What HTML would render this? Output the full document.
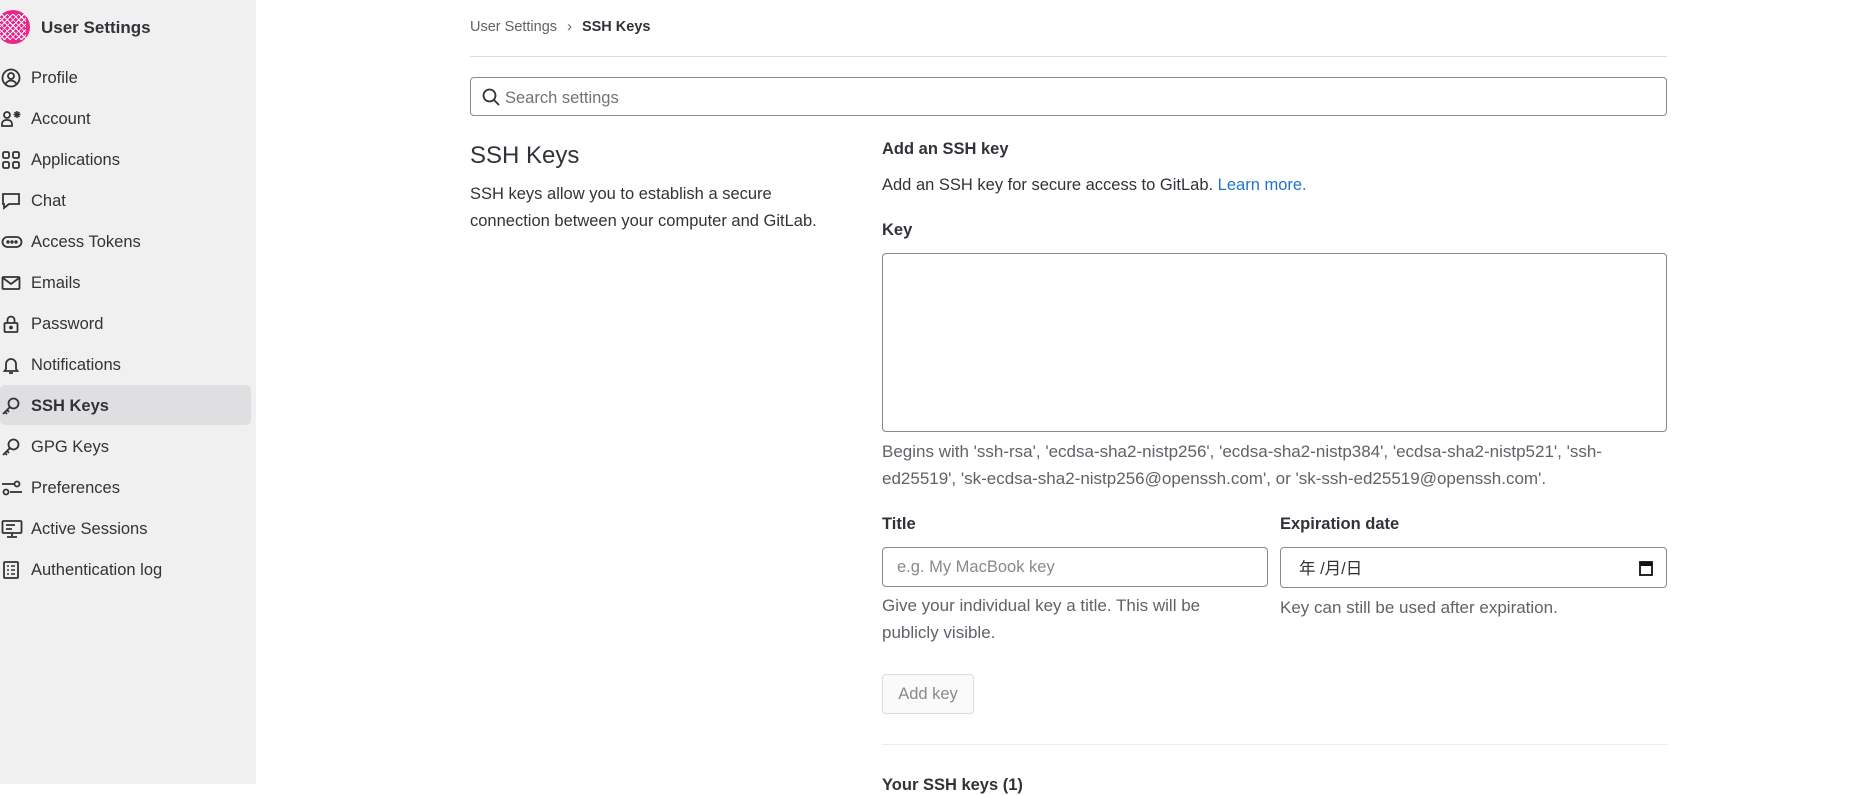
<!DOCTYPE html>
<html><head><meta charset="utf-8"><style>
*{box-sizing:border-box;margin:0;padding:0}
body{width:1856px;height:784px;overflow:hidden;background:#fff;font-family:"Liberation Sans","Noto Sans CJK SC",sans-serif;color:#333238;position:relative}
.sb{position:absolute;left:0;top:0;width:256px;height:784px;background:#f0f0f0}
.logo{position:absolute;left:-4px;top:10px;width:34px;height:34px;border-radius:50%;background:#e9278b;overflow:hidden}
.logo:after{content:"";position:absolute;inset:4px;background:repeating-linear-gradient(45deg,transparent 0 3px,#fff 3px 4px),repeating-linear-gradient(-45deg,transparent 0 3px,#fff 3px 4px)}
.title{position:absolute;left:41px;top:18px;font-size:17px;font-weight:bold}
.item{position:absolute;left:0;width:251px;height:40px;font-size:16.5px;display:flex;align-items:center;padding-left:31px;border-radius:5px;padding-top:2px}
.item svg{position:absolute;left:1px;top:11px}
.item.act{background:#dfdfe2;font-weight:bold}
.abs{position:absolute}
.inp{position:absolute;border:1px solid #89888d;border-radius:4px;background:#fff}
.lbl{position:absolute;font-size:16.5px;font-weight:bold}
.help{position:absolute;font-size:17px;color:#626168;line-height:27px}
</style></head><body>
<div class="sb">
<div class="logo"></div>
<div class="title">User Settings</div>
<div class="item" style="top:57px"><svg width="20" height="20" viewBox="0 0 20 20" fill="none" stroke="#333" stroke-width="1.8"><circle cx="10" cy="10" r="8.5"/><circle cx="10" cy="8" r="3"/><path d="M4.5 16c1.5-2.5 3.5-3.5 5.5-3.5s4 1 5.5 3.5"/></svg>Profile</div>
<div class="item" style="top:98px"><svg width="22" height="20" viewBox="0 0 22 20" fill="none" stroke="#333" stroke-width="1.8"><circle cx="6" cy="6" r="3"/><path d="M1 17v-2a4 4 0 0 1 4-4h2a4 4 0 0 1 4 4v2z"/><path d="M16 2v7M12.5 5.5h7M13.5 3l5 5M18.5 3l-5 5" stroke-width="1.5"/></svg>Account</div>
<div class="item" style="top:139px"><svg width="20" height="20" viewBox="0 0 20 20" fill="none" stroke="#333" stroke-width="1.8"><rect x="2" y="2" width="6" height="6" rx="1.5"/><rect x="12" y="2" width="6" height="6" rx="1.5"/><rect x="2" y="12" width="6" height="6" rx="1.5"/><rect x="12" y="12" width="6" height="6" rx="1.5"/></svg>Applications</div>
<div class="item" style="top:180px"><svg width="20" height="20" viewBox="0 0 20 20" fill="none" stroke="#333" stroke-width="1.8"><path d="M2 3h16v10H8l-5 4v-4H2z"/></svg>Chat</div>
<div class="item" style="top:221px"><svg width="22" height="20" viewBox="0 0 22 20" fill="none" stroke="#333" stroke-width="1.8"><rect x="1.5" y="5" width="19" height="10" rx="5"/><circle cx="7" cy="10" r=".8" fill="#333"/><circle cx="11" cy="10" r=".8" fill="#333"/><circle cx="15" cy="10" r=".8" fill="#333"/></svg>Access Tokens</div>
<div class="item" style="top:262px"><svg width="20" height="20" viewBox="0 0 20 20" fill="none" stroke="#333" stroke-width="1.8"><rect x="1.5" y="4" width="17" height="12" rx="1"/><path d="M2 5l8 6 8-6"/></svg>Emails</div>
<div class="item" style="top:303px"><svg width="20" height="20" viewBox="0 0 20 20" fill="none" stroke="#333" stroke-width="1.8"><rect x="3.5" y="9" width="13" height="9" rx="1"/><path d="M6.5 9V6a3.5 3.5 0 0 1 7 0v3"/><circle cx="10" cy="13.5" r="1" fill="#333"/></svg>Password</div>
<div class="item" style="top:344px"><svg width="20" height="20" viewBox="0 0 20 20" fill="none" stroke="#333" stroke-width="1.8"><path d="M5 14V9a5 5 0 0 1 10 0v5l1.5 2h-13z"/><path d="M8 18h4"/></svg>Notifications</div>
<div class="item act" style="top:385px"><svg width="20" height="20" viewBox="0 0 20 20" fill="none" stroke="#333" stroke-width="1.8"><circle cx="12.5" cy="7.5" r="5"/><path d="M9 11l-7 7M4 16l2 2M6 14l2 2"/></svg>SSH Keys</div>
<div class="item" style="top:426px"><svg width="20" height="20" viewBox="0 0 20 20" fill="none" stroke="#333" stroke-width="1.8"><circle cx="12.5" cy="7.5" r="5"/><path d="M9 11l-7 7M4 16l2 2M6 14l2 2"/></svg>GPG Keys</div>
<div class="item" style="top:467px"><svg width="22" height="20" viewBox="0 0 22 20" fill="none" stroke="#333" stroke-width="1.8"><path d="M1 6h12"/><circle cx="16" cy="6" r="2.5"/><path d="M9 14h12"/><circle cx="5" cy="14" r="2.5"/></svg>Preferences</div>
<div class="item" style="top:508px"><svg width="22" height="20" viewBox="0 0 22 20" fill="none" stroke="#333" stroke-width="1.8"><rect x="1.5" y="2" width="19" height="12" rx="1"/><path d="M5 6h9M5 10h6M11 14v3M6 18h10"/></svg>Active Sessions</div>
<div class="item" style="top:549px"><svg width="20" height="20" viewBox="0 0 20 20" fill="none" stroke="#333" stroke-width="1.8"><rect x="3" y="2" width="14" height="16" rx="1"/><path d="M6 6h2M10 6h4M6 10h2M10 10h4M6 14h2M10 14h4" stroke-width="1.5"/></svg>Authentication log</div>
</div>

<div class="abs" style="left:470px;top:19px;font-size:14.5px;color:#626168">User Settings <span style="margin:0 6px">›</span> <b style="color:#333238">SSH Keys</b></div>
<div class="abs" style="left:470px;top:56px;width:1197px;height:1px;background:#dcdcde"></div>
<div class="inp" style="left:470px;top:77px;width:1197px;height:39px"><svg class="abs" style="left:10px;top:9px" width="20" height="20" viewBox="0 0 20 20" fill="none" stroke="#333" stroke-width="1.8"><circle cx="8.5" cy="8.5" r="6"/><path d="M13 13l5 5"/></svg><span class="abs" style="left:34px;top:11px;font-size:16.5px;color:#737278">Search settings</span></div>

<div class="abs" style="left:470px;top:142px;font-size:24px">SSH Keys</div>
<div class="help" style="left:470px;top:181px;width:380px;color:#333238;font-size:16.5px">SSH keys allow you to establish a secure connection between your computer and GitLab.</div>

<div class="lbl" style="left:882px;top:140px">Add an SSH key</div>
<div class="abs" style="left:882px;top:176px;font-size:16.5px">Add an SSH key for secure access to GitLab. <span style="color:#1f75cb">Learn more.</span></div>
<div class="lbl" style="left:882px;top:221px">Key</div>
<div class="inp" style="left:882px;top:253px;width:785px;height:179px"></div>
<div class="help" style="left:882px;top:438px;width:775px">Begins with 'ssh-rsa', 'ecdsa-sha2-nistp256', 'ecdsa-sha2-nistp384', 'ecdsa-sha2-nistp521', 'ssh-ed25519', 'sk-ecdsa-sha2-nistp256@openssh.com', or 'sk-ssh-ed25519@openssh.com'.</div>
<div class="lbl" style="left:882px;top:515px">Title</div>
<div class="lbl" style="left:1280px;top:515px">Expiration date</div>
<div class="inp" style="left:882px;top:547px;width:386px;height:40px"><span class="abs" style="left:14px;top:10px;font-size:16.5px;color:#89888d">e.g. My MacBook key</span></div>
<div class="inp" style="left:1280px;top:547px;width:387px;height:41px"><span class="abs" style="left:18px;top:7px;font-size:16.5px;color:#333">年 /月/日</span><svg class="abs" style="right:12px;top:11px" width="16" height="18" viewBox="0 0 16 18"><rect x="2" y="3" width="12" height="13" fill="none" stroke="#111" stroke-width="1.8"/><rect x="2" y="3" width="12" height="4" fill="#111"/></svg></div>
<div class="help" style="left:882px;top:592px;width:370px">Give your individual key a title. This will be publicly visible.</div>
<div class="help" style="left:1280px;top:594px">Key can still be used after expiration.</div>
<div class="abs" style="left:882px;top:674px;width:92px;height:40px;border:1px solid #dcdcde;border-radius:4px;background:#fafafa;color:#89888d;font-size:16.5px;text-align:center;line-height:38px">Add key</div>
<div class="abs" style="left:882px;top:744px;width:785px;height:1px;background:#ececef"></div>
<div class="lbl" style="left:882px;top:776px">Your SSH keys (1)</div>
</body></html>
